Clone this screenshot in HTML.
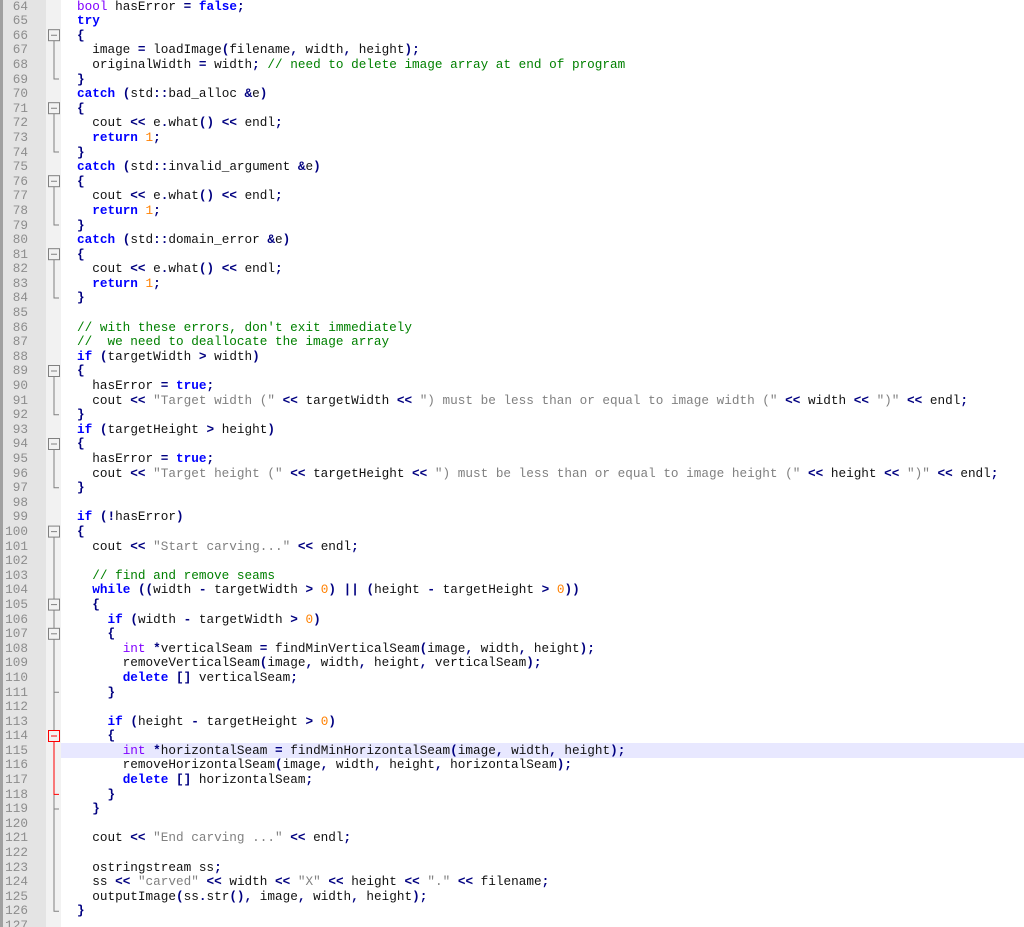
<!DOCTYPE html>
<html><head><meta charset="utf-8"><style>
html,body{margin:0;padding:0;background:#fff;width:1024px;height:927px;overflow:hidden;position:relative}
.ln{position:absolute;left:3px;top:0;width:43px;height:927px;background:#e4e4e4}
.lb{position:absolute;left:0;top:0;width:3px;height:927px;background:#a0a0a0}
.fm{position:absolute;left:46px;top:0;width:15px;height:927px;background:#f2f2f2}
.hl{position:absolute;left:61px;top:743.3px;width:963px;height:14.6px;background:#e8e8ff}
pre{margin:0;font-family:"Liberation Mono",monospace;font-size:12.7px;line-height:14.6px;position:absolute;top:-0.4px}
.nums{left:3px;width:25px;text-align:right;color:#8c8c8c}
.code{left:77px;color:#111}
.k{color:#0000ff;font-weight:bold}.t{color:#8000ff}.n{color:#ff8000}.s{color:#808080}.c{color:#008000}.o{color:#000080;font-weight:bold}
svg{position:absolute;left:0;top:0}
</style></head><body>
<div class="lb"></div><div class="ln"></div><div class="fm"></div><div class="hl"></div>
<pre class="nums">64
65
66
67
68
69
70
71
72
73
74
75
76
77
78
79
80
81
82
83
84
85
86
87
88
89
90
91
92
93
94
95
96
97
98
99
100
101
102
103
104
105
106
107
108
109
110
111
112
113
114
115
116
117
118
119
120
121
122
123
124
125
126
127</pre>
<svg width="1024" height="927" fill="none" stroke="#808080" stroke-width="1">
<g><rect x="48.5" y="29.7" width="11" height="11"/><path d="M51 35.2h6M54 40.7V79h5"/></g>
<g><rect x="48.5" y="102.7" width="11" height="11"/><path d="M51 108.2h6M54 113.7V152h5"/></g>
<g><rect x="48.5" y="175.7" width="11" height="11"/><path d="M51 181.2h6M54 186.7V225h5"/></g>
<g><rect x="48.5" y="248.7" width="11" height="11"/><path d="M51 254.2h6M54 259.7V298h5"/></g>
<g><rect x="48.5" y="365.5" width="11" height="11"/><path d="M51 371h6M54 376.5V414.8h5"/></g>
<g><rect x="48.5" y="438.5" width="11" height="11"/><path d="M51 444h6M54 449.5V487.8h5"/></g>
<g><rect x="48.5" y="526.1" width="11" height="11"/><path d="M51 531.6h6M54 537.1V599.1M54 610.1V628.3M54 639.3V730.5M54 741.5V911.2h5M54 692.2h5M54 809h5"/></g>
<rect x="48.5" y="599.1" width="11" height="11"/><path d="M51 604.6h6"/>
<rect x="48.5" y="628.3" width="11" height="11"/><path d="M51 633.8h6"/>
<g stroke="#ff0000"><rect x="48.5" y="730.5" width="11" height="11"/><path d="M51 736h6M54 741.5V794.4h5"/></g>
</svg>
<pre class="code"><span class="t">bool</span> hasError <span class="o">=</span> <span class="k">false</span><span class="o">;</span>
<span class="k">try</span>
<span class="o">{</span>
  image <span class="o">=</span> loadImage<span class="o">(</span>filename<span class="o">,</span> width<span class="o">,</span> height<span class="o">);</span>
  originalWidth <span class="o">=</span> width<span class="o">;</span> <span class="c">// need to delete image array at end of program</span>
<span class="o">}</span>
<span class="k">catch</span> <span class="o">(</span>std<span class="o">::</span>bad_alloc <span class="o">&amp;</span>e<span class="o">)</span>
<span class="o">{</span>
  cout <span class="o">&lt;&lt;</span> e<span class="o">.</span>what<span class="o">()</span> <span class="o">&lt;&lt;</span> endl<span class="o">;</span>
  <span class="k">return</span> <span class="n">1</span><span class="o">;</span>
<span class="o">}</span>
<span class="k">catch</span> <span class="o">(</span>std<span class="o">::</span>invalid_argument <span class="o">&amp;</span>e<span class="o">)</span>
<span class="o">{</span>
  cout <span class="o">&lt;&lt;</span> e<span class="o">.</span>what<span class="o">()</span> <span class="o">&lt;&lt;</span> endl<span class="o">;</span>
  <span class="k">return</span> <span class="n">1</span><span class="o">;</span>
<span class="o">}</span>
<span class="k">catch</span> <span class="o">(</span>std<span class="o">::</span>domain_error <span class="o">&amp;</span>e<span class="o">)</span>
<span class="o">{</span>
  cout <span class="o">&lt;&lt;</span> e<span class="o">.</span>what<span class="o">()</span> <span class="o">&lt;&lt;</span> endl<span class="o">;</span>
  <span class="k">return</span> <span class="n">1</span><span class="o">;</span>
<span class="o">}</span>

<span class="c">// with these errors, don't exit immediately</span>
<span class="c">//  we need to deallocate the image array</span>
<span class="k">if</span> <span class="o">(</span>targetWidth <span class="o">&gt;</span> width<span class="o">)</span>
<span class="o">{</span>
  hasError <span class="o">=</span> <span class="k">true</span><span class="o">;</span>
  cout <span class="o">&lt;&lt;</span> <span class="s">"Target width ("</span> <span class="o">&lt;&lt;</span> targetWidth <span class="o">&lt;&lt;</span> <span class="s">") must be less than or equal to image width ("</span> <span class="o">&lt;&lt;</span> width <span class="o">&lt;&lt;</span> <span class="s">")"</span> <span class="o">&lt;&lt;</span> endl<span class="o">;</span>
<span class="o">}</span>
<span class="k">if</span> <span class="o">(</span>targetHeight <span class="o">&gt;</span> height<span class="o">)</span>
<span class="o">{</span>
  hasError <span class="o">=</span> <span class="k">true</span><span class="o">;</span>
  cout <span class="o">&lt;&lt;</span> <span class="s">"Target height ("</span> <span class="o">&lt;&lt;</span> targetHeight <span class="o">&lt;&lt;</span> <span class="s">") must be less than or equal to image height ("</span> <span class="o">&lt;&lt;</span> height <span class="o">&lt;&lt;</span> <span class="s">")"</span> <span class="o">&lt;&lt;</span> endl<span class="o">;</span>
<span class="o">}</span>

<span class="k">if</span> <span class="o">(!</span>hasError<span class="o">)</span>
<span class="o">{</span>
  cout <span class="o">&lt;&lt;</span> <span class="s">"Start carving..."</span> <span class="o">&lt;&lt;</span> endl<span class="o">;</span>

  <span class="c">// find and remove seams</span>
  <span class="k">while</span> <span class="o">((</span>width <span class="o">-</span> targetWidth <span class="o">&gt;</span> <span class="n">0</span><span class="o">)</span> <span class="o">||</span> <span class="o">(</span>height <span class="o">-</span> targetHeight <span class="o">&gt;</span> <span class="n">0</span><span class="o">))</span>
  <span class="o">{</span>
    <span class="k">if</span> <span class="o">(</span>width <span class="o">-</span> targetWidth <span class="o">&gt;</span> <span class="n">0</span><span class="o">)</span>
    <span class="o">{</span>
      <span class="t">int</span> <span class="o">*</span>verticalSeam <span class="o">=</span> findMinVerticalSeam<span class="o">(</span>image<span class="o">,</span> width<span class="o">,</span> height<span class="o">);</span>
      removeVerticalSeam<span class="o">(</span>image<span class="o">,</span> width<span class="o">,</span> height<span class="o">,</span> verticalSeam<span class="o">);</span>
      <span class="k">delete</span> <span class="o">[]</span> verticalSeam<span class="o">;</span>
    <span class="o">}</span>

    <span class="k">if</span> <span class="o">(</span>height <span class="o">-</span> targetHeight <span class="o">&gt;</span> <span class="n">0</span><span class="o">)</span>
    <span class="o">{</span>
      <span class="t">int</span> <span class="o">*</span>horizontalSeam <span class="o">=</span> findMinHorizontalSeam<span class="o">(</span>image<span class="o">,</span> width<span class="o">,</span> height<span class="o">);</span>
      removeHorizontalSeam<span class="o">(</span>image<span class="o">,</span> width<span class="o">,</span> height<span class="o">,</span> horizontalSeam<span class="o">);</span>
      <span class="k">delete</span> <span class="o">[]</span> horizontalSeam<span class="o">;</span>
    <span class="o">}</span>
  <span class="o">}</span>

  cout <span class="o">&lt;&lt;</span> <span class="s">"End carving ..."</span> <span class="o">&lt;&lt;</span> endl<span class="o">;</span>

  ostringstream ss<span class="o">;</span>
  ss <span class="o">&lt;&lt;</span> <span class="s">"carved"</span> <span class="o">&lt;&lt;</span> width <span class="o">&lt;&lt;</span> <span class="s">"X"</span> <span class="o">&lt;&lt;</span> height <span class="o">&lt;&lt;</span> <span class="s">"."</span> <span class="o">&lt;&lt;</span> filename<span class="o">;</span>
  outputImage<span class="o">(</span>ss<span class="o">.</span>str<span class="o">(),</span> image<span class="o">,</span> width<span class="o">,</span> height<span class="o">);</span>
<span class="o">}</span>
</pre>
</body></html>
